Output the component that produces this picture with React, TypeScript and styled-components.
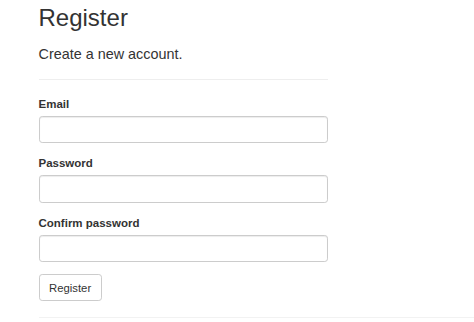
import React from "react";
import styled, { createGlobalStyle } from "styled-components";

// Global styles
const GlobalStyle = createGlobalStyle`
  html, body {
    margin: 0;
    padding: 0;
    background: #fff;
  }
  body {
    font-family: "Liberation Sans", Arial, sans-serif;
    font-size: 11.2px;
    line-height: 16px;
    color: #333;
  }
  * {
    box-sizing: border-box;
  }
`;

// Styled Components
const Page = styled.div`
  display: flow-root;
  padding: 5px 0 0 38.5px;
`;

const Title = styled.h2`
  margin: 0 0 8px;
  font-size: 24px;
  font-weight: 500;
  line-height: 1.1;
`;

const Form = styled.form`
  display: flow-root;
  width: 289.5px;
`;

const Subtitle = styled.h4`
  margin: 8px 0 0;
  font-size: 14.4px;
  font-weight: 500;
  line-height: 1.1;
`;

const Rule = styled.hr<{ $faint?: boolean }>`
  margin: 16px 0;
  border: 0;
  border-top: 1px solid ${(p) => (p.$faint ? "#f2f2f2" : "#eee")};
  height: 0;
`;

const FormGroup = styled.div<{ $last?: boolean }>`
  margin-bottom: ${(p) => (p.$last ? "0" : "12px")};
`;

const Label = styled.label`
  display: block;
  margin-bottom: 4px;
  font-size: 11.5px;
  font-weight: bold;
  line-height: 16px;
`;

const Input = styled.input`
  display: block;
  width: 100%;
  height: 27.2px;
  padding: 4.8px 9.6px;
  font: inherit;
  color: #555;
  background: #fff;
  border: 1px solid #ccc;
  border-radius: 3.2px;
  box-shadow: inset 0 1px 1px rgba(0, 0, 0, 0.075);
  outline: none;
`;

const Button = styled.button`
  display: inline-block;
  padding: 4.8px 9.6px;
  font: inherit;
  font-size: 11.3px;
  line-height: 16px;
  color: #333;
  background: #fff;
  border: 1px solid #ccc;
  border-radius: 3.2px;
  cursor: pointer;
`;

const fields = [
  { id: "email", label: "Email", type: "email" },
  { id: "password", label: "Password", type: "password" },
  { id: "confirm", label: "Confirm password", type: "password" },
];

const App: React.FC = () => {
  return (
    <>
      <GlobalStyle />
      <Page>
        <Title>Register</Title>
        <Form onSubmit={(e) => e.preventDefault()}>
          <Subtitle>Create a new account.</Subtitle>
          <Rule />
          {fields.map((f) => (
            <FormGroup key={f.id}>
              <Label htmlFor={f.id}>{f.label}</Label>
              <Input id={f.id} type={f.type} />
            </FormGroup>
          ))}
          <FormGroup $last>
            <Button type="submit">Register</Button>
          </FormGroup>
        </Form>
        <Rule $faint />
      </Page>
    </>
  );
};

export default App;
